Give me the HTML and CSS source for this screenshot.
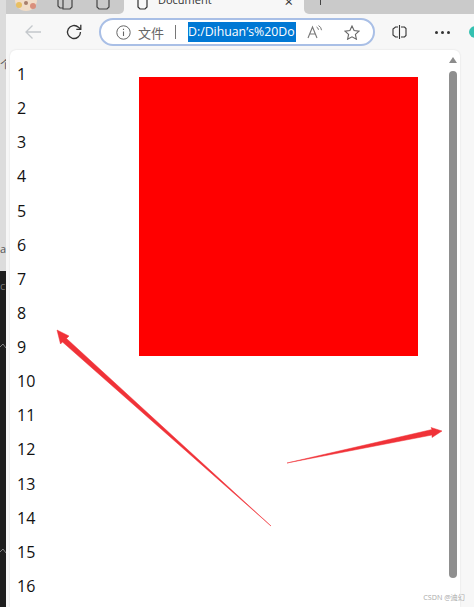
FILE: index.html
```html
<!DOCTYPE html>
<html lang="zh-CN">
<head>
    <meta charset="UTF-8">
    <meta name="viewport" content="width=device-width, initial-scale=1.0">
    <title>Document</title>
    <link rel="stylesheet" href="styles.css">
</head>
<body>
<div class="desktop">
    <div class="desk-top">
        <span class="desk-char one">个</span>
        <span class="desk-char two">a</span>
    </div>
    <div class="desk-bottom">
        <span class="desk-char three">c</span>
        <svg class="chevron first" width="6" height="6" viewBox="0 0 6 6">
            <path d="M0 4 3 1l3 4" fill="none" stroke="#999" stroke-width="0.800"/>
        </svg>
        <svg class="chevron second" width="6" height="6" viewBox="0 0 6 6">
            <path d="M0 4 3 1l3 4" fill="none" stroke="#999" stroke-width="0.800"/>
        </svg>
    </div>
</div>

<div class="browser">
    <div class="tabstrip">
        <div class="tabs-left">
            <svg class="avatar" width="24" height="12" viewBox="0 0 24 12">
                <circle cx="12" cy="0" r="11" fill="#f1ddc8"/>
                <circle cx="5" cy="5" r="3" fill="#e8bf62"/>
                <circle cx="19" cy="6" r="3" fill="#d98f7c"/>
                <circle cx="12" cy="3" r="2" fill="#a77f6c"/>
            </svg>
            <svg class="tab-icon" width="16" height="10" viewBox="0 0 16 10">
                <path d="M1 0v6l2 2h3V0M6 0v9h7l2-2V0" fill="none" stroke="#444" stroke-width="1.200"/>
            </svg>
            <svg class="tab-icon last" width="14" height="10" viewBox="0 0 14 10">
                <path d="M1 0v7l2 2h8l2-2V0" fill="none" stroke="#444" stroke-width="1.200"/>
            </svg>
        </div>
        <div class="tab-active">
            <svg width="11" height="10" viewBox="0 0 11 10">
                <path d="M1 0v7l2 2h5l2-2V0" fill="none" stroke="#333" stroke-width="1.200"/>
            </svg>
            <span class="tab-title">Document</span>
            <span class="tab-close">×</span>
        </div>
        <div class="tabs-right">
            <span class="tab-plus"></span>
        </div>
    </div>

    <div class="toolbar">
        <svg class="nav-back" width="18" height="16" viewBox="0 0 18 16">
            <path d="M17 8H2M8.500 1.500 2 8l6.500 6.500" fill="none" stroke="#c4c8cc" stroke-width="1.300"/>
        </svg>
        <svg class="nav-reload" width="18" height="18" viewBox="0 0 18 18">
            <path d="M15.500 9a6.500 6.500 0 1 1-2-4.700L15.500 6" fill="none" stroke="#333" stroke-width="1.300"/>
            <path d="M15.800 1.800V6.300H11.300" fill="none" stroke="#333" stroke-width="1.300"/>
        </svg>
        <div class="addressbar">
            <svg class="info" width="15" height="15" viewBox="0 0 15 15">
                <circle cx="7.500" cy="7.500" r="6.700" fill="none" stroke="#666" stroke-width="1"/>
                <path d="M7.500 6.500v4.500M7.500 3.800v1.300" stroke="#666" stroke-width="1.100"/>
            </svg>
            <span class="scheme">文件</span>
            <span class="divider"></span>
            <span class="url">D:/Dihuan’s%20Do</span>
            <svg class="read-aloud" width="16" height="14" viewBox="0 0 16 14">
                <path d="M1 13 5.500 2 10 13M2.800 9h5.500" fill="none" stroke="#777" stroke-width="1.100"/>
                <path d="M9.500 2a3.500 3.500 0 0 1 2 2.800M11.500 .6a5.500 5.500 0 0 1 3 4.600" fill="none" stroke="#777" stroke-width="1"/>
            </svg>
            <svg class="star" width="16" height="15" viewBox="0 0 16 15">
                <path d="m8 1 2.100 4.500 4.900.6-3.600 3.300 1 4.800L8 11.800l-4.400 2.400 1-4.800L1 6.100l4.900-.6z" fill="none" stroke="#666" stroke-width="1.100"/>
            </svg>
        </div>
        <svg class="split" width="15" height="14" viewBox="0 0 15 14">
            <path d="M7.500 0v14M6 2H3.500L1 4v6l2.500 2H6M9 2h3.500L14 3.500v7L12.500 12H9" fill="none" stroke="#333" stroke-width="1.100"/>
        </svg>
        <span class="more"><i></i><i></i><i></i></span>
        <span class="edge-logo"></span>
    </div>

    <div class="viewport">
        <ul class="numbers">
            <li>1</li><li>2</li><li>3</li><li>4</li>
            <li>5</li><li>6</li><li>7</li><li>8</li>
            <li>9</li><li>10</li><li>11</li><li>12</li>
            <li>13</li><li>14</li><li>15</li><li>16</li>
        </ul>
        <div class="box"></div>
        <div class="scrollbar">
            <span class="scroll-up"></span>
            <span class="scroll-thumb"></span>
        </div>
    </div>
</div>

<!-- red arrows drawn on top of the shot -->
<svg class="marks" width="474" height="607" viewBox="0 0 474 607">
    <path d="M57 330 69 336 66.500 338.500 271 526 62.500 342 60.500 344Z" fill="#f03238" stroke="#f03238" stroke-width="0.500"/>
    <path d="M287 463 432 429.500 431 427.500 442 431 432 437.500 432 435Z" fill="#f03238" stroke="#f03238" stroke-width="0.500"/>
</svg>

<span class="watermark">CSDN @迪幻</span>
</body>
</html>
```

FILE: styles.css
```css
html, body {
    margin: 0;
    height: 607px;
    overflow: hidden;
}
body {
    display: flex;
    position: relative;
    background-color: #f7f7f7;
    font-family: "Open Sans", "Noto Sans CJK SC", sans-serif;
    color: #111;
}

/* desktop peeking out on the left */
.desktop {
    width: 6px;
    flex: none;
    display: flex;
    flex-direction: column;
}
.desk-top {
    height: 271px;
    background-color: #dcdcdc;
    overflow: hidden;
}
.desk-char {
    display: block;
    width: 6px;
    overflow: hidden;
    font-size: 11px;
    line-height: 14px;
    color: #555;
}
.desk-char.one {
    margin-top: 58px;
}
.desk-char.two {
    margin-top: 170px;
}
.desk-char.three {
    margin-top: 8px;
    color: #777;
}
.desk-bottom {
    flex: 1;
    background-color: #1d1d1d;
    overflow: hidden;
}
.chevron {
    display: block;
}
.chevron.first {
    margin-top: 50px;
}
.chevron.second {
    margin-top: 199px;
}

.browser {
    flex: 1;
    display: flex;
    flex-direction: column;
    min-width: 0;
}

/* tab strip, cut off by the top of the shot */
.tabstrip {
    height: 14px;
    display: flex;
    flex: none;
    overflow: hidden;
}
.tabs-left {
    width: 118px;
    background-color: #cacaca;
    border-bottom-right-radius: 5px;
    display: flex;
    gap: 19px;
    padding-left: 8px;
    box-sizing: border-box;
}
.tab-icon.last {
    margin-left: 4px;
}
.tab-active {
    width: 180px;
    display: flex;
    align-items: flex-start;
    padding: 0 11px 0 13px;
    box-sizing: border-box;
    background-color: #f7f7f7;
    font-size: 11px;
    line-height: 8px;
    color: #333;
}
.tab-title {
    margin-left: 10px;
    margin-top: -4px;
}
.tab-close {
    margin-left: auto;
    margin-top: -3px;
    font-size: 15px;
}
.tabs-right {
    flex: 1;
    background-color: #cacaca;
    border-bottom-left-radius: 5px;
    padding-left: 16px;
}
.tab-plus {
    display: block;
    width: 1px;
    height: 5px;
    background-color: #444;
}

.toolbar {
    height: 36px;
    flex: none;
    display: flex;
    align-items: center;
    background-color: #f7f7f7;
}
.toolbar > * {
    flex: none;
}
.nav-back {
    margin-left: 18px;
}
.nav-reload {
    margin-left: 23px;
}
.addressbar {
    width: 276px;
    height: 28px;
    box-sizing: border-box;
    margin-left: 16px;
    padding-left: 15px;
    display: flex;
    align-items: center;
    background-color: #fff;
    border: 2px solid #a9bfe6;
    border-radius: 14px;
    font-size: 13px;
}
.addressbar > * {
    flex: none;
}
.scheme {
    margin-left: 7px;
    color: #666;
    white-space: nowrap;
}
.divider {
    width: 1px;
    height: 14px;
    margin-left: 11px;
    background-color: #777;
}
.url {
    margin-left: 12px;
    width: 108px;
    height: 20px;
    line-height: 20px;
    white-space: nowrap;
    overflow: hidden;
    background-color: #0078d4;
    color: #fff;
    font-size: 12.300px;
}
.read-aloud {
    margin-left: 11px;
}
.star {
    margin-left: 21px;
}
.split {
    margin-left: 17px;
}
.more {
    margin-left: 28px;
    display: flex;
    gap: 3px;
}
.more i {
    width: 3px;
    height: 3px;
    border-radius: 50%;
    background-color: #333;
}
.edge-logo {
    margin-left: 19px;
    width: 14px;
    height: 12px;
    border-radius: 50% 0 0 50%;
    background-color: #35c1b1;
}

/* page area */
.viewport {
    flex: 1;
    width: 450px;
    margin-left: 4px;
    position: relative;
    display: flex;
    align-items: flex-start;
    background-color: #fff;
    border-top-left-radius: 6px;
    border-top-right-radius: 6px;
    box-shadow: 0 0 2px rgba(0, 0, 0, 0.12);
}
.numbers {
    list-style: none;
    margin: 7px 0 0;
    padding: 0 0 0 7px;
    width: 129px;
    flex: none;
    box-sizing: border-box;
    font-size: 16px;
    line-height: 34.130px;
}
.box {
    width: 279px;
    height: 279px;
    margin-top: 27px;
    background-color: #f00;
}
.scrollbar {
    position: absolute;
    top: 0;
    right: 3px;
    width: 8px;
    display: flex;
    flex-direction: column;
    align-items: center;
}
.scroll-up {
    width: 0;
    height: 0;
    margin-top: 7px;
    border-left: 4px solid transparent;
    border-right: 4px solid transparent;
    border-bottom: 6px solid #8c8c8c;
}
.scroll-thumb {
    width: 8px;
    height: 507px;
    margin-top: 8px;
    border-radius: 4px;
    background-color: #8f8f8f;
}

.marks {
    position: absolute;
    top: 0;
    left: 0;
    pointer-events: none;
}
.watermark {
    position: absolute;
    right: 9px;
    bottom: 5px;
    font-size: 7.200px;
    line-height: 10px;
    color: #aaa;
}
```
